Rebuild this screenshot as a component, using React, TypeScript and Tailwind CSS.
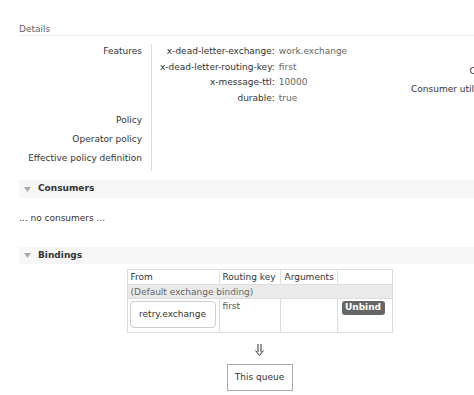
import React from "react";

const Tri = () => (
  <svg width="7" height="5" viewBox="0 0 7 5" className="block">
    <path d="M0 0 L7 0 L3.5 5 Z" fill="#aaa" />
  </svg>
);

const DownDouble = () => (
  <svg width="9" height="12" viewBox="0 0 9 12" className="block">
    <path d="M3 0 V8 M6 0 V8" stroke="#333" strokeWidth="1" fill="none" />
    <path d="M0.5 6.5 L4.5 11.5 L8.5 6.5" stroke="#333" strokeWidth="1" fill="none" />
  </svg>
);

export default function App() {
  const features: [string, string][] = [
    ["x-dead-letter-exchange:", "work.exchange"],
    ["x-dead-letter-routing-key:", "first"],
    ["x-message-ttl:", "10000"],
    ["durable:", "true"],
  ];
  return (
    <div className="w-[474px] h-[395px] overflow-hidden bg-white font-['DejaVu_Sans',Verdana,sans-serif] text-[9px] text-[#333]">
      <div className="pl-[19px] pt-[22px] w-[540px]">
        <h2 className="h-[14px] leading-[14px] text-[#666] border-b border-[#eee] font-normal">Details</h2>
        <div className="mt-[8px] flex">
          <div className="flex w-[380px]">
            <div className="w-[133px] border-r border-[#ddd] pr-[9px] text-right pb-[3.5px]">
              <div className="h-[66.5px] leading-[15.5px]">Features</div>
              <div className="h-[19px] leading-[19px]">Policy</div>
              <div className="h-[19px] leading-[19px]">Operator policy</div>
              <div className="h-[19px] leading-[19px]">Effective policy definition</div>
            </div>
            <div className="pl-[8px]">
              <div className="grid grid-cols-[auto_auto] justify-start leading-[15.5px]">
                {features.map(([k, v]) => (
                  <React.Fragment key={k}>
                    <div className="text-right">{k}</div>
                    <div className="pl-[4px] text-[#666]">{v}</div>
                  </React.Fragment>
                ))}
              </div>
            </div>
          </div>
          <div className="w-[121px] text-right">
            <div className="h-[18px] leading-[18px]">State</div>
            <div className="h-[18px] leading-[18px]">Consumers</div>
            <div className="h-[18px] leading-[18px] flex justify-end items-center">
              Consumer utilisation
              <span className="ml-[4px] w-[12px] h-[12px] rounded-full bg-[#ccc]" />
            </div>
          </div>
        </div>

        <div className="mt-[9px] h-[18px] bg-[#f7f7f7] flex items-center pl-[5px]">
          <Tri />
          <span className="ml-[7px] font-bold">Consumers</span>
        </div>
        <p className="mt-[13px] h-[14px] leading-[14px]">... no consumers ...</p>

        <div className="mt-[22px] h-[17px] bg-[#f7f7f7] flex items-center pl-[5px]">
          <Tri />
          <span className="ml-[7px] font-bold">Bindings</span>
        </div>

        <div className="w-[481px] flex flex-col items-center">
          <table className="mt-[5px] border-collapse border border-[#ddd] w-[265px] table-fixed">
            <colgroup>
              <col className="w-[92px]" />
              <col className="w-[61px]" />
              <col className="w-[57px]" />
              <col className="w-[55px]" />
            </colgroup>
            <thead>
              <tr className="h-[15px]">
                <th className="border border-[#ddd] px-[3px] text-left font-normal leading-[13px]">From</th>
                <th className="border border-[#ddd] px-[3px] text-left font-normal leading-[13px]">Routing key</th>
                <th className="border border-[#ddd] px-[4px] text-left font-normal leading-[13px]">Arguments</th>
                <th className="border border-[#ddd]"></th>
              </tr>
            </thead>
            <tbody>
              <tr className="h-[14px] bg-[#eaeaea]">
                <td colSpan={4} className="px-[3px] text-[#666] leading-[12px] border border-[#ddd]">(Default exchange binding)</td>
              </tr>
              <tr className="h-[34px]">
                <td className="border border-[#ddd] pl-[2px] pr-[2px] pt-[2px] pb-[3px] align-top">
                  <div className="h-[27px] w-[86px] border border-[#ccc] rounded-[4px] flex items-center justify-center">
                    retry.exchange
                  </div>
                </td>
                <td className="border border-[#ddd] px-[3px] align-top leading-[14px] text-[#555]">first</td>
                <td className="border border-[#ddd]"></td>
                <td className="border border-[#ddd] align-top pt-[2px] pl-[4px]">
                  <div className="w-[43px] h-[14px] rounded-[3px] bg-[#666] text-white font-bold flex items-center justify-center">
                    Unbind
                  </div>
                </td>
              </tr>
            </tbody>
          </table>
          <div className="mt-[11px]">
            <DownDouble />
          </div>
          <div className="mt-[8px] w-[66px] h-[27px] border border-[#aaa] flex items-center justify-center">
            This queue
          </div>
        </div>
      </div>
    </div>
  );
}
